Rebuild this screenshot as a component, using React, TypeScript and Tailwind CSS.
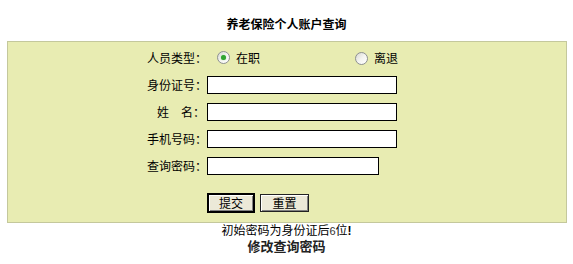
import React from "react";

const font = { fontFamily: '"Noto Sans CJK SC", "Liberation Sans", sans-serif' };
const footFont = { fontFamily: '"Liberation Sans", "Noto Sans CJK SC", sans-serif' };

function Radio({ checked }: { checked?: boolean }) {
  return (
    <span className="inline-flex h-[13px] w-[13px] items-center justify-center rounded-full border border-[#8d9092] bg-gradient-to-br from-[#d8d8d2] via-[#f4f4f0] to-white">
      {checked && <span className="h-[5px] w-[5px] rounded-full bg-[#31a431] shadow-[0_0_1px_#6fd36f]" />}
    </span>
  );
}

function Row({ label, children }: { label: string; children: React.ReactNode }) {
  return (
    <div className="flex h-[27px] items-center">
      <div className="w-[58px] whitespace-pre text-right text-[12px] leading-none text-black">{label}</div>
      <div className="ml-[2px] flex items-center">{children}</div>
    </div>
  );
}

function Input({ w }: { w: string }) {
  return <input type="text" className={`h-[18px] ${w} border border-black bg-white outline-none`} />;
}

export default function App() {
  return (
    <div className="h-[264px] w-[573px] bg-white" style={font}>
      <div className="flex h-[41px] items-center justify-center pt-[6px] text-[12px] font-bold text-black">
        养老保险个人账户查询
      </div>
      <div className="ml-[7px] h-[182px] w-[560px] border border-[#c4c89c] bg-[#e8ecb2] pt-[2px]">
        <div className="ml-[139px]">
          <Row label="人员类型：">
            <div className="ml-[10px] flex items-center">
              <Radio checked />
              <span className="ml-[6px] text-[12px] leading-none">在职</span>
              <span className="ml-[95px]">
                <Radio />
              </span>
              <span className="ml-[6px] text-[12px] leading-none">离退</span>
            </div>
          </Row>
          <Row label="身份证号：">
            <Input w="w-[190px]" />
          </Row>
          <Row label="姓　名：">
            <Input w="w-[190px]" />
          </Row>
          <Row label="手机号码：">
            <Input w="w-[190px]" />
          </Row>
          <Row label="查询密码：">
            <Input w="w-[172px]" />
          </Row>
          <div className="mt-[10px] flex h-[27px] items-center pl-[60px]">
            <button className="flex h-[20px] w-[48px] items-center justify-center border-2 border-black bg-[#ece9d8] text-[12px] leading-none text-black shadow-[inset_1px_1px_0_#fff,inset_-1px_-1px_0_#808080]">
              提交
            </button>
            <button className="ml-[5px] flex h-[18px] w-[49px] items-center justify-center border border-[#222] bg-[#ece9d8] text-[12px] leading-none text-black shadow-[inset_1px_1px_0_#fff,inset_-1px_-1px_0_#808080]">
              重置
            </button>
          </div>
        </div>
      </div>
      <div className="mt-[1px] flex flex-col items-center text-black" style={footFont}>
        <div className="h-[15px] text-[12px] leading-[15px]">
          初始密码为身份证后<span className="text-[11px] text-[#333]">6</span>位<span className="font-bold">!</span>
        </div>
        <div className="h-[15px] text-[13px] font-bold leading-[15px] text-[#222]">修改查询密码</div>
      </div>
    </div>
  );
}
